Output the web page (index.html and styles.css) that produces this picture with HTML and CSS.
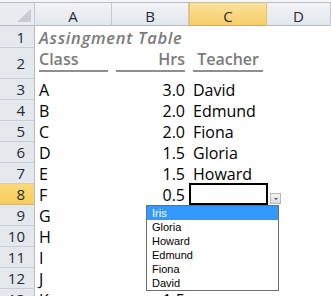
FILE: index.html
```html
<!DOCTYPE html>
<html>
<head>
<meta charset="utf-8">
<link rel="stylesheet" href="styles.css">
</head>
<body>
<div class="app">
  <div class="topstrip"></div>
  <div class="sheet">
    <div class="corner"><span class="tri"></span></div>
    <div class="colh">A</div>
    <div class="colh">B</div>
    <div class="colh sel">C</div>
    <div class="colh">D</div>

    <div class="rowh">1</div>
    <div class="cell title">Assingment Table</div>
    <div class="cell"></div>
    <div class="cell"></div>
    <div class="cell"></div>

    <div class="rowh">2</div>
    <div class="cell hdr"><span class="ul">Class</span></div>
    <div class="cell hdr num"><span class="ul">Hrs</span></div>
    <div class="cell hdr"><span class="ul">&nbsp;Teacher</span></div>
    <div class="cell"></div>

    <div class="rowh">3</div><div class="cell">A</div><div class="cell num">3.0</div><div class="cell">David</div><div class="cell"></div>
    <div class="rowh">4</div><div class="cell">B</div><div class="cell num">2.0</div><div class="cell">Edmund</div><div class="cell"></div>
    <div class="rowh">5</div><div class="cell">C</div><div class="cell num">2.0</div><div class="cell">Fiona</div><div class="cell"></div>
    <div class="rowh">6</div><div class="cell">D</div><div class="cell num">1.5</div><div class="cell">Gloria</div><div class="cell"></div>
    <div class="rowh">7</div><div class="cell">E</div><div class="cell num">1.5</div><div class="cell">Howard</div><div class="cell"></div>
    <div class="rowh sel">8</div><div class="cell">F</div><div class="cell num">0.5</div>
    <div class="cell active">
      <span class="ddbtn"></span>
      <ul class="ddlist">
        <li class="hi">Iris</li>
        <li>Gloria</li>
        <li>Howard</li>
        <li>Edmund</li>
        <li>Fiona</li>
        <li>David</li>
      </ul>
    </div>
    <div class="cell"></div>
    <div class="rowh">9</div><div class="cell">G</div><div class="cell num"></div><div class="cell"></div><div class="cell"></div>
    <div class="rowh">10</div><div class="cell">H</div><div class="cell num"></div><div class="cell"></div><div class="cell"></div>
    <div class="rowh">11</div><div class="cell">I</div><div class="cell num"></div><div class="cell"></div><div class="cell"></div>
    <div class="rowh">12</div><div class="cell">J</div><div class="cell num"></div><div class="cell"></div><div class="cell"></div>
    <div class="rowh">13</div><div class="cell">K</div><div class="cell num">1.5</div><div class="cell"></div><div class="cell"></div>
  </div>
</div>
</body>
</html>
```

FILE: styles.css
```css
html, body {
  margin: 0;
  padding: 0;
  background: #ffffff;
}
.app {
  width: 331px;
  height: 296px;
  overflow: hidden;
  font-family: "Open Sans", "Liberation Sans", sans-serif;
}
.topstrip {
  height: 2px;
  background: #f3f5f8;
  border-bottom: 1px solid #b9bec6;
}
.sheet {
  display: grid;
  grid-template-columns: 35px 77px 77px 78px 64px;
  grid-template-rows: 23px 22px 31px repeat(11, 21px);
}
.corner {
  position: relative;
  background: #e9ecf0;
  border-right: 1px solid #c4c9d1;
  border-bottom: 1px solid #b5bbc4;
  box-sizing: border-box;
}
.tri {
  position: absolute;
  right: 3px;
  bottom: 3px;
  width: 0;
  height: 0;
  border-left: 14px solid transparent;
  border-bottom: 13px solid #c7ccd4;
}
.colh {
  background: linear-gradient(#f1f3f6, #e3e7ec);
  border-right: 1px solid #c4c9d1;
  border-bottom: 1px solid #b5bbc4;
  box-sizing: border-box;
  display: flex;
  align-items: center;
  justify-content: center;
  font-size: 15px;
  color: #262b33;
  padding-top: 4px;
}
.colh.sel {
  background: linear-gradient(#fbe29a, #f6cd6a);
  border-left: 1px solid #f0bf55;
  border-right: 1px solid #f0bf55;
  border-bottom: 1px solid #e2a83a;
}
.rowh {
  background: #e4e7ec;
  border-right: 1px solid #b5bbc4;
  border-bottom: 1px solid #c9ced6;
  box-sizing: border-box;
  display: flex;
  align-items: center;
  justify-content: flex-end;
  padding-right: 9px;
  font-size: 15px;
  color: #262b33;
}
.rowh.sel {
  background: linear-gradient(#fbd978, #f8cc5c);
  border-bottom: 1px solid #e8b548;
}
.cell {
  display: flex;
  align-items: center;
  padding: 0 4px;
  font-size: 16px;
  color: #000;
  white-space: nowrap;
  min-width: 0;
  position: relative;
}
.cell.num {
  justify-content: flex-end;
}
.cell.title {
  font-style: italic;
  font-weight: 600;
  font-size: 16.5px;
  color: #7b7b7b;
  overflow: visible;
  letter-spacing: 0.7px;
}
.cell.hdr {
  align-items: flex-end;
  padding: 0 4px 7px 4px;
  color: #7b7b7b;
  font-weight: 600;
}
.cell.hdr .ul {
  display: block;
  flex: 1;
  border-bottom: 2px solid #8f8f8f;
  line-height: 18px;
  padding-bottom: 2px;
}
.cell.hdr.num .ul {
  text-align: right;
}
.cell.active {
  overflow: visible;
  z-index: 5;
}
.cell.active::before {
  content: "";
  position: absolute;
  left: 0;
  top: -1px;
  right: -1px;
  bottom: 0;
  border: 2px solid #000;
}
.ddbtn {
  position: absolute;
  left: 81px;
  top: 9px;
  width: 11px;
  height: 11px;
  box-sizing: border-box;
  background: linear-gradient(#f4f4f4, #dcdcdc);
  border: 1px solid #b8b8b8;
}
.ddbtn::after {
  content: "";
  position: absolute;
  left: 3px;
  top: 4px;
  border-left: 2px solid transparent;
  border-right: 2px solid transparent;
  border-top: 2px solid #555;
}
.ddlist {
  position: absolute;
  left: -43px;
  top: 21px;
  width: 133px;
  margin: 0;
  padding: 0;
  list-style: none;
  background: #fff;
  border: 1px solid #6e6e6e;
  box-sizing: border-box;
  font-family: "Liberation Sans", "DejaVu Sans", sans-serif;
  font-size: 11px;
  color: #000;
}
.ddlist li {
  height: 14px;
  line-height: 14px;
  padding-left: 5px;
}
.ddlist li.hi {
  background: #3399ff;
  color: #fff;
}
```
